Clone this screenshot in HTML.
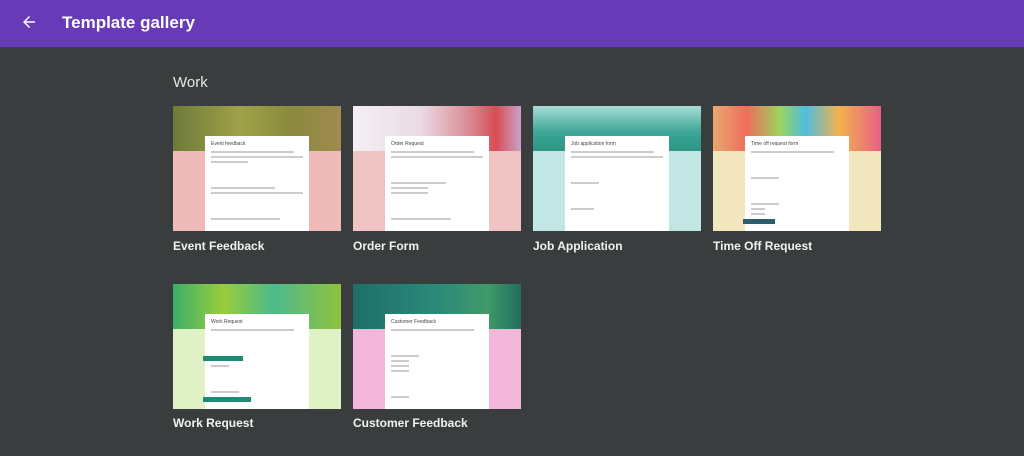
<!DOCTYPE html>
<html><head><style>
*{margin:0;padding:0;box-sizing:border-box}
body{width:1024px;height:456px;background:#393d3e;font-family:"Liberation Sans",sans-serif;position:relative;overflow:hidden}
.hdr{position:absolute;left:0;top:0;width:1024px;height:47px;background:#673ab7}
.hdr .t{position:absolute;left:62px;top:13px;color:#fff;font-size:17px;font-weight:bold}
.sec{position:absolute;left:173px;top:74px;color:#e8e8e8;font-size:15px}
.card{position:absolute;width:168px;height:125px;overflow:hidden}
.ban{position:absolute;left:0;top:0;width:100%;height:45px}
.form{position:absolute;left:32px;top:30px;width:104px;height:100px;background:#fff;padding:5px 6px}
.form .h{font-size:5px;color:#444;margin-bottom:4px}
.ln{height:2px;background:#ccc;margin:3px 0}
.lab{position:absolute;color:#f2f2f2;font-size:12px;font-weight:bold}
.pill{height:5px;width:40px;margin:4px 0 4px -8px}
</style></head><body>
<div class="hdr">
<svg style="position:absolute;left:20px;top:13px" width="18" height="18" viewBox="0 0 24 24"><path d="M20 11H7.8l5.6-5.6L12 4l-8 8 8 8 1.4-1.4L7.8 13H20z" fill="#fff"/></svg>
<div class="t">Template gallery</div></div>
<div class="sec">Work</div>

<div class="card" style="left:173px;top:106px;background:#efbbb9">
<div class="ban" style="background:linear-gradient(90deg,#6d7a3a,#a0a248 40%,#8a8a3c 70%,#a08a50)"></div>
<div class="form"><div class="h">Event feedback</div><div class="ln" style="width:90%"></div><div class="ln"></div><div class="ln" style="width:40%"></div><br><div class="ln" style="width:70%"></div><div class="ln"></div><br><div class="ln" style="width:75%"></div></div></div>
<div class="lab" style="left:173px;top:239px">Event Feedback</div>

<div class="card" style="left:353px;top:106px;background:#f0c4c3">
<div class="ban" style="background:linear-gradient(90deg,#f3eff2,#eadbe4 40%,#d98891 70%,#d84c55 85%,#c9a3c8)"></div>
<div class="form"><div class="h">Order Request</div><div class="ln" style="width:90%"></div><div class="ln"></div><br><div class="ln" style="width:60%"></div><div class="ln" style="width:40%"></div><div class="ln" style="width:40%"></div><br><div class="ln" style="width:65%"></div></div></div>
<div class="lab" style="left:353px;top:239px">Order Form</div>

<div class="card" style="left:533px;top:106px;background:#c2e6e4">
<div class="ban" style="background:linear-gradient(180deg,#a8dcd6,#3aa593 60%,#2f9585)"></div>
<div class="form"><div class="h">Job application form</div><div class="ln" style="width:90%"></div><div class="ln"></div><br><div class="ln" style="width:30%"></div><br><div class="ln" style="width:25%"></div><br><div class="ln" style="width:40%"></div></div></div>
<div class="lab" style="left:533px;top:239px">Job Application</div>

<div class="card" style="left:713px;top:106px;background:#f1e6be">
<div class="ban" style="background:linear-gradient(90deg,#e8a870,#f06d5c 20%,#9bd45e 40%,#4fbde0 55%,#f2b34b 75%,#e85f86)"></div>
<div class="form"><div class="h">Time off request form</div><div class="ln" style="width:90%"></div><br><div class="ln" style="width:30%"></div><br><div class="ln" style="width:30%"></div><div class="ln" style="width:15%"></div><div class="ln" style="width:15%"></div><div class="pill" style="background:#2b5d6e;width:32px"></div></div></div>
<div class="lab" style="left:713px;top:239px">Time Off Request</div>

<div class="card" style="left:173px;top:284px;background:#e0f1c5">
<div class="ban" style="background:linear-gradient(90deg,#3cae6a,#9acd3a 30%,#4cba8a 60%,#8fc23e)"></div>
<div class="form"><div class="h">Work Request</div><div class="ln" style="width:90%"></div><br><div class="pill" style="background:#1f8a76"></div><div class="ln" style="width:20%"></div><br><div class="ln" style="width:30%"></div><div class="pill" style="background:#1f8a76;width:48px"></div></div></div>
<div class="lab" style="left:173px;top:416px">Work Request</div>

<div class="card" style="left:353px;top:284px;background:#f5b6dc">
<div class="ban" style="background:linear-gradient(90deg,#1f6e6a,#2a8a7a 50%,#3f9a66 80%,#226e62)"></div>
<div class="form"><div class="h">Customer Feedback</div><div class="ln" style="width:90%"></div><br><div class="ln" style="width:30%"></div><div class="ln" style="width:20%"></div><div class="ln" style="width:20%"></div><div class="ln" style="width:20%"></div><br><div class="ln" style="width:20%"></div><br><div class="ln" style="width:50%"></div></div></div>
<div class="lab" style="left:353px;top:416px">Customer Feedback</div>
</body></html>
